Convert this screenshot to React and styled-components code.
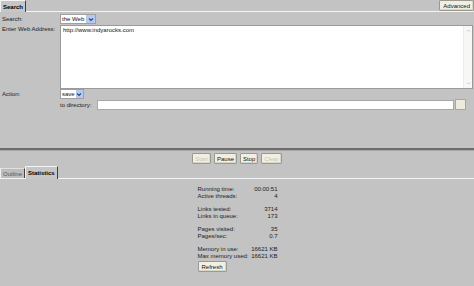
import React from "react";
import styled, { createGlobalStyle } from "styled-components";

const Global = createGlobalStyle`
  html, body { margin: 0; padding: 0; background: #c3c3c3; }
  body { font-family: "Liberation Sans", Arial, sans-serif; }
  * { white-space: nowrap; }
`;

const Page = styled.div`
  width: 474px;
  height: 286px;
  background: #c3c3c3;
  display: flex;
  flex-direction: column;
  font-size: 6px;
  color: #111;
  overflow: hidden;
`;

const TabBar = styled.div`
  display: flex;
  align-items: stretch;
  height: ${(p) => p.$h}px;
  border-bottom: 1px solid #f4f4f4;
  box-sizing: border-box;
`;

const Tab = styled.div`
  display: flex;
  align-items: center;
  padding: 0 ${(p) => (p.$active ? 2 : 2)}px;
  font-weight: ${(p) => (p.$active ? "bold" : "normal")};
  color: ${(p) => (p.$active ? "#000" : "#555")};
  background: ${(p) => (p.$active ? "#c6c6c6" : "#bdbdbd")};
  border-top: 1px solid ${(p) => (p.$active ? "#f4f4f4" : "#e0e0e0")};
  border-left: 1px solid #f0f0f0;
  border-right: 1px solid #404040;
  margin-top: ${(p) => (p.$active ? 0 : 2)}px;
  margin-bottom: ${(p) => (p.$active ? -1 : 0)}px;
  font-size: 6px;
  box-sizing: border-box;
`;

const Spacer = styled.div`
  flex: 1;
`;

const Button = styled.button`
  font-family: "Liberation Sans", Arial, sans-serif;
  font-size: 6px;
  padding: 0 ${(p) => p.$px || 2}px;
  height: ${(p) => p.$h || 11}px;
  background: #f1efe2;
  color: ${(p) => (p.$disabled ? "#c8c6b8" : "#111")};
  border: 1px solid #9a9a90;
  border-radius: 1px;
  box-shadow: inset -1px -1px 0 #d8d6c6;
  line-height: 1;
  cursor: default;
`;

const Form = styled.div`
  display: grid;
  grid-template-columns: 58px 1fr;
  column-gap: 0;
  padding: 2px 1px 0 2px;
  align-items: start;
`;

const Label = styled.div`
  font-size: 6px;
  line-height: 10px;
  color: #222;
`;

const Select = styled.div`
  display: flex;
  align-items: stretch;
  width: ${(p) => p.$w}px;
  height: 10px;
  background: #fff;
  border: 1px solid #a0a0a0;
  box-sizing: border-box;
`;

const SelectText = styled.div`
  flex: 1;
  font-size: 6px;
  line-height: 8px;
  padding-left: 1px;
`;

const SelectArrow = styled.div`
  width: 9px;
  background: #b9c9ee;
  border-left: 1px solid #fff;
  display: flex;
  align-items: center;
  justify-content: center;
`;

const TextArea = styled.div`
  height: 64px;
  background: #fff;
  border: 1px solid #9a9a9a;
  box-sizing: border-box;
  display: flex;
  margin-top: 1px;
`;

const TextContent = styled.div`
  flex: 1;
  font-size: 6px;
  padding: 1px 2px;
`;

const ScrollBar = styled.div`
  width: 9px;
  border-left: 1px solid #ececec;
  background: #f7f7f5;
  display: flex;
  flex-direction: column;
  justify-content: space-between;
  align-items: center;
  padding: 3px 0;
  box-sizing: border-box;
`;

const DirRow = styled.div`
  display: flex;
  align-items: center;
  height: 11px;
  padding-right: 7px;
`;

const DirLabel = styled.div`
  width: 37px;
  font-size: 6px;
  color: #222;
`;

const Input = styled.div`
  flex: 1;
  height: 10px;
  background: #fff;
  border: 1px solid #a8a8a8;
  box-sizing: border-box;
`;

const Browse = styled.div`
  width: 11px;
  height: 11px;
  margin-left: 1px;
  background: #ecebdc;
  border: 1px solid #a9a89a;
  box-sizing: border-box;
`;

const Splitter = styled.div`
  margin-top: auto;
  height: 2px;
  background: #6c6c6c;
  border-bottom: 1px solid #a8a8a8;
`;

const Lower = styled.div`
  height: 135px;
  display: flex;
  flex-direction: column;
`;

const ButtonRow = styled.div`
  display: flex;
  justify-content: center;
  gap: 3px;
  padding-top: 2px;
  height: 13px;
`;

const Stats = styled.div`
  align-self: center;
  width: 80px;
  margin-top: 7px;
  margin-left: 1px;
  display: flex;
  flex-direction: column;
`;

const Group = styled.div`
  margin-bottom: ${(p) => (p.$last ? 1 : 6)}px;
`;

const StatRow = styled.div`
  display: flex;
  justify-content: space-between;
  font-size: 6px;
  line-height: 7px;
  color: #222;
`;

const arrow = (
  <svg width="6" height="5" viewBox="0 0 6 5">
    <path d="M1 1.5 L3 3.5 L5 1.5" stroke="#2a4a9a" strokeWidth="1.2" fill="none" />
  </svg>
);

const groups = [
  [["Running time:", "00:00:51"], ["Active threads:", "4"]],
  [["Links tested:", "3714"], ["Links in queue:", "173"]],
  [["Pages visited:", "35"], ["Pages/sec:", "0.7"]],
  [["Memory in use:", "16621 KB"], ["Max memory used:", "16621 KB"]],
];

export default function App() {
  return (
    <Page>
      <Global />
      <TabBar $h={12}>
        <Tab $active>Search</Tab>
        <Spacer />
        <Button $h={11} $px={3}>Advanced</Button>
      </TabBar>
      <Form>
        <Label>Search:</Label>
        <Select $w={36}>
          <SelectText>the Web</SelectText>
          <SelectArrow>{arrow}</SelectArrow>
        </Select>
        <Label>Enter Web Address:</Label>
        <TextArea>
          <TextContent>http://www.indyarocks.com</TextContent>
          <ScrollBar>
            <svg width="5" height="3" viewBox="0 0 5 3"><path d="M1 2.5 L2.5 1 L4 2.5" stroke="#bbb" fill="none" strokeWidth="0.8" /></svg>
            <svg width="5" height="3" viewBox="0 0 5 3"><path d="M1 0.5 L2.5 2 L4 0.5" stroke="#bbb" fill="none" strokeWidth="0.8" /></svg>
          </ScrollBar>
        </TextArea>
        <Label>Action:</Label>
        <Select $w={24}>
          <SelectText>save</SelectText>
          <SelectArrow>{arrow}</SelectArrow>
        </Select>
        <div />
        <DirRow>
          <DirLabel>to directory:</DirLabel>
          <Input />
          <Browse />
        </DirRow>
      </Form>
      <Splitter />
      <Lower>
        <ButtonRow>
          <Button $disabled>Start</Button>
          <Button>Pause</Button>
          <Button>Stop</Button>
          <Button $disabled>Clear</Button>
        </ButtonRow>
        <TabBar $h={13}>
          <Tab>Outline</Tab>
          <Tab $active>Statistics</Tab>
        </TabBar>
        <Stats>
          {groups.map((g, i) => (
            <Group key={i} $last={i === groups.length - 1}>
              {g.map(([k, v]) => (
                <StatRow key={k}>
                  <span>{k}</span>
                  <span>{v}</span>
                </StatRow>
              ))}
            </Group>
          ))}
          <div>
            <Button $px={3}>Refresh</Button>
          </div>
        </Stats>
      </Lower>
    </Page>
  );
}
